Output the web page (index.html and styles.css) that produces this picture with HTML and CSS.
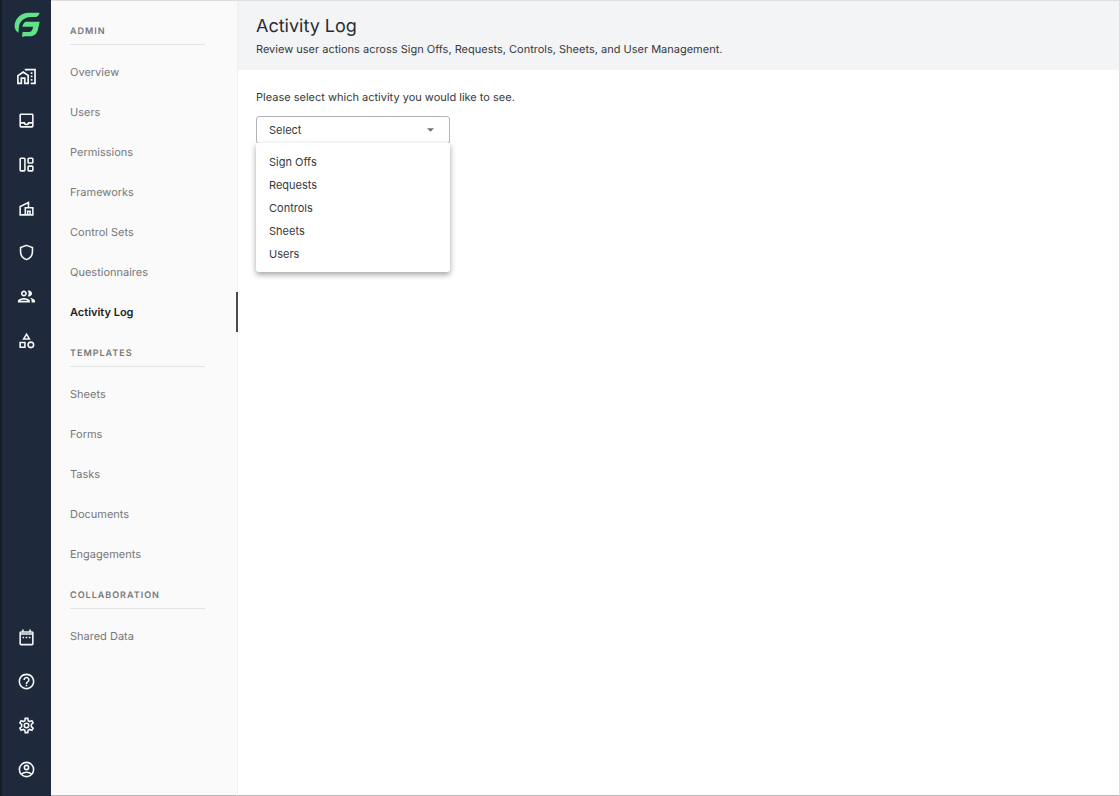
FILE: index.html
```html
<!DOCTYPE html>
<html lang="en">
<head>
  <meta charset="UTF-8">
  <meta name="viewport" content="width=device-width, initial-scale=1">
  <title>Activity Log</title>
  <link rel="stylesheet" href="styles.css">
</head>
<body>
  <div class="app">
    <nav class="rail" aria-label="Main">
      <a class="logo" href="#" aria-label="Home">
        <svg viewBox="0 0 78 78"><path d="M77 2C74 10 72 14 64 15H49C30 16 17 29 15 44L13 62C5 56 1 49 2 38C5 17 22 2 43 2ZM35 29H77L73 48C70 64 62 73 47 73H34L24 75L26 60H44C52 60 56 55 57 44H25C27 36 30 31 35 29Z"/></svg>
      </a>
      <div class="rail-group">
        <a href="#" aria-label="Properties">
          <svg viewBox="0 0 24 24"><g transform="translate(-1 -1) scale(1.08)"><path d="M17 15h2v2h-2zM17 11h2v2h-2zM17 7h2v2h-2zM10 3v1.5l2 1.3V5h9v14h-4v2h6V3zM8.2 5.7L15 10.3V21H9v-6H7v6H1V10.500zM11 19h2v-7.800L8.200 8.100 3 11.400V19h2v-6h6z"/></g></svg>
        </a>
        <a href="#" aria-label="Inbox">
          <svg viewBox="0 0 24 24"><path d="M19 3H5c-1.100 0-2 .9-2 2v14c0 1.100.9 2 2 2h14c1.100 0 2-.9 2-2V5c0-1.100-.9-2-2-2zm0 16H5v-3h3.560c.69 1.190 1.970 2 3.450 2s2.750-.81 3.450-2H19v3zm0-5h-5c0 1.100-.9 2-2 2s-2-.9-2-2H5V5h14v9z"/></svg>
        </a>
        <a href="#" aria-label="Dashboard">
          <svg class="line" viewBox="0 0 24 24"><rect x="4" y="4" width="6" height="16" rx="1"/><rect x="14" y="4" width="6" height="6" rx="1"/><rect x="14" y="14" width="6" height="6" rx="1"/></svg>
        </a>
        <a href="#" aria-label="Entities">
          <svg class="line" viewBox="0 0 24 24"><path d="M4 20V9.500L14.500 4.500v6.500H20v9zM10.500 20v-9H15M13.500 20v-4.500h3V20"/></svg>
        </a>
        <a href="#" aria-label="Controls">
          <svg class="line" viewBox="0 0 24 24"><path d="M12 3l7.500 2.800V11c0 4.800-3 8.400-7.500 10-4.500-1.600-7.500-5.200-7.500-10V5.800z"/></svg>
        </a>
        <a href="#" aria-label="People">
          <svg viewBox="0 0 24 24"><g transform="translate(-1 -1) scale(1.08)"><path d="M9 13.750c-2.340 0-7 1.170-7 3.500V19h14v-1.750c0-2.330-4.660-3.500-7-3.500zM4.340 17c.84-.58 2.870-1.250 4.660-1.250s3.820.67 4.660 1.250H4.340zM9 12c1.930 0 3.500-1.570 3.500-3.500S10.930 5 9 5 5.500 6.570 5.500 8.500 7.070 12 9 12zm0-5c.83 0 1.500.67 1.500 1.500S9.830 10 9 10s-1.500-.67-1.500-1.500S8.170 7 9 7zm7.040 6.810c1.160.84 1.960 1.960 1.960 3.440V19h4v-1.750c0-2.020-3.500-3.170-5.960-3.440zM15 12c1.930 0 3.500-1.570 3.500-3.500S16.930 5 15 5c-.54 0-1.040.13-1.500.35.63.89 1 1.980 1 3.150s-.37 2.260-1 3.150c.46.220.96.350 1.500.35z"/></g></svg>
        </a>
        <a href="#" aria-label="Categories">
          <svg class="line" viewBox="0 0 24 24"><path d="M12 4l3.600 6H8.400zM4 14.500h6V20.500H4z"/><circle cx="17.500" cy="17.500" r="3.500"/></svg>
        </a>
      </div>
      <div class="rail-group rail-bottom">
        <a href="#" aria-label="Calendar">
          <svg class="line" viewBox="0 0 24 24"><rect x="4" y="5" width="16" height="16" rx="1"/><path d="M4 7.500h16M7.500 2v3M16.500 2v3M7 12h2M11 12h2M15 12h2"/></svg>
        </a>
        <a href="#" aria-label="Help">
          <svg viewBox="0 0 24 24"><path d="M11 18h2v-2h-2v2zm1-16C6.480 2 2 6.480 2 12s4.480 10 10 10 10-4.480 10-10S17.520 2 12 2zm0 18c-4.410 0-8-3.590-8-8s3.590-8 8-8 8 3.590 8 8-3.590 8-8 8zm0-14c-2.210 0-4 1.790-4 4h2c0-1.100.9-2 2-2s2 .9 2 2c0 2-3 1.750-3 5h2c0-2.250 3-2.500 3-5 0-2.210-1.790-4-4-4z"/></svg>
        </a>
        <a href="#" aria-label="Settings">
          <svg class="line" viewBox="0 0 24 24"><path d="M10.400 3h3.200l.5 2.900 1.900 1.100 2.800-1.100 1.600 2.800-2.300 1.900v2.800l2.300 1.900-1.600 2.800-2.800-1.100-1.900 1.100-.5 2.900h-3.200l-.5-2.900L8 17l-2.800 1.100-1.600-2.800 2.300-1.900v-2.800L3.600 8.700l1.600-2.800L8 7l1.900-1.100z"/><circle cx="12" cy="12" r="2.800"/></svg>
        </a>
        <a href="#" aria-label="Account">
          <svg class="line" viewBox="0 0 24 24"><circle cx="12" cy="12" r="9"/><circle cx="12" cy="9.500" r="2.700"/><path d="M5.500 18c3.500-3.300 9.500-3.300 13 0"/></svg>
        </a>
      </div>
    </nav>

    <aside class="sidebar">
      <section>
        <h2>Admin</h2>
        <ul>
          <li><a href="#">Overview</a></li>
          <li><a href="#">Users</a></li>
          <li><a href="#">Permissions</a></li>
          <li><a href="#">Frameworks</a></li>
          <li><a href="#">Control Sets</a></li>
          <li><a href="#">Questionnaires</a></li>
          <li><a href="#" class="active" aria-current="page">Activity Log</a></li>
        </ul>
      </section>
      <section>
        <h2>Templates</h2>
        <ul>
          <li><a href="#">Sheets</a></li>
          <li><a href="#">Forms</a></li>
          <li><a href="#">Tasks</a></li>
          <li><a href="#">Documents</a></li>
          <li><a href="#">Engagements</a></li>
        </ul>
      </section>
      <section>
        <h2>Collaboration</h2>
        <ul>
          <li><a href="#">Shared Data</a></li>
        </ul>
      </section>
    </aside>

    <main>
      <header class="page-header">
        <h1>Activity Log</h1>
        <p>Review user actions across Sign Offs, Requests, Controls, Sheets, and User Management.</p>
      </header>
      <div class="content">
        <label for="activity">Please select which activity you would like to see.</label>
        <div class="dropdown">
          <select id="activity">
            <option>Select</option>
            <option>Sign Offs</option>
            <option>Requests</option>
            <option>Controls</option>
            <option>Sheets</option>
            <option>Users</option>
          </select>
          <svg class="arrow" viewBox="0 0 8 4"><path d="M0 0h8L4 4z"/></svg>
          <div class="menu">
            <button type="button">Sign Offs</button>
            <button type="button">Requests</button>
            <button type="button">Controls</button>
            <button type="button">Sheets</button>
            <button type="button">Users</button>
          </div>
        </div>
      </div>
    </main>
  </div>
</body>
</html>
```
FILE: styles.css
```css
* {
  box-sizing: border-box;
}
body {
  margin: 0;
  font-family: Inter, "Liberation Sans", sans-serif;
  font-size: 11px;
  line-height: 16px;
  text-rendering: geometricPrecision;
  color: #37383c;
  background-color: #fff;
}
h1, h2, p, ul {
  margin: 0;
  padding: 0;
}
ul {
  list-style: none;
}
a {
  color: inherit;
  text-decoration: none;
}
.app {
  display: flex;
  min-height: 100vh;
}

/* icon rail */
.rail {
  display: flex;
  flex-direction: column;
  flex: none;
  width: 51px;
  padding: 12px 0 5px;
  border-left: 2px solid #171d27;
  background-color: #1e2a3b;
}
.logo {
  display: block;
  height: 42px;
  text-align: center;
}
.logo svg {
  width: 26px;
  height: 26px;
  fill: #62e387;
}
.rail-group a {
  display: flex;
  align-items: center;
  justify-content: center;
  height: 44px;
}
.rail-group svg {
  width: 19px;
  height: 19px;
  fill: #f4f6f8;
}
.rail-group .line {
  fill: none;
  stroke: #f4f6f8;
  stroke-width: 2;
}
.rail-bottom {
  margin-top: auto;
}

/* section links */
.sidebar {
  flex: none;
  width: 187px;
  padding-top: 23px;
  border-top: 1px solid #dedee0;
  border-right: 1px solid #f1f1f2;
  border-bottom: 1px solid #b9b9bb;
  background-color: #fafafa;
}
.sidebar section {
  margin-bottom: 14px;
}
.sidebar h2 {
  margin: 0 32px 7px 19px;
  padding-bottom: 4px;
  border-bottom: 1px solid #e4e4e5;
  font-size: 9px;
  font-weight: 600;
  letter-spacing: 1px;
  text-transform: uppercase;
  color: #77787a;
}
.sidebar li a {
  display: block;
  margin-right: -1px;
  padding: 12px 19px;
  color: #76777a;
}
.sidebar li .active {
  border-right: 2px solid #4a4b4e;
  font-weight: 600;
  color: #222326;
}

/* page */
main {
  flex: 1;
  border: solid #dedee0;
  border-width: 1px 1px 1px 0;
  border-bottom-color: #b9b9bb;
}
.page-header {
  padding: 14px 18px 13px;
  background-color: #f3f4f6;
}
.page-header h1 {
  padding-bottom: 2px;
  font-size: 18px;
  font-weight: 400;
  line-height: 24px;
  color: #2b2c30;
}
.content {
  padding: 19px 18px;
}
.content label {
  display: block;
  margin-bottom: 11px;
}
.dropdown {
  position: relative;
  width: 194px;
}
.dropdown select {
  display: block;
  appearance: none;
  width: 100%;
  height: 28px;
  padding: 0 12px;
  border: 1px solid #b4b4b6;
  border-radius: 3px;
  background-color: #fff;
  font: inherit;
  color: inherit;
}
.arrow {
  position: absolute;
  top: 12px;
  right: 16px;
  width: 7px;
  height: 4px;
  fill: #707174;
  pointer-events: none;
}
.menu {
  position: absolute;
  top: 27px;
  left: 0;
  width: 100%;
  padding: 7px 0;
  border-radius: 0 0 3px 3px;
  background-color: #fff;
  box-shadow: 0 3px 5px rgba(0, 0, 0, 0.25), 0 2px 9px rgba(0, 0, 0, 0.12);
}
.menu button {
  display: block;
  width: 100%;
  height: 23px;
  padding: 0 13px;
  border: none;
  background: none;
  font: inherit;
  color: inherit;
  text-align: left;
  cursor: pointer;
}
.menu button:hover {
  background-color: #f3f4f6;
}
```
